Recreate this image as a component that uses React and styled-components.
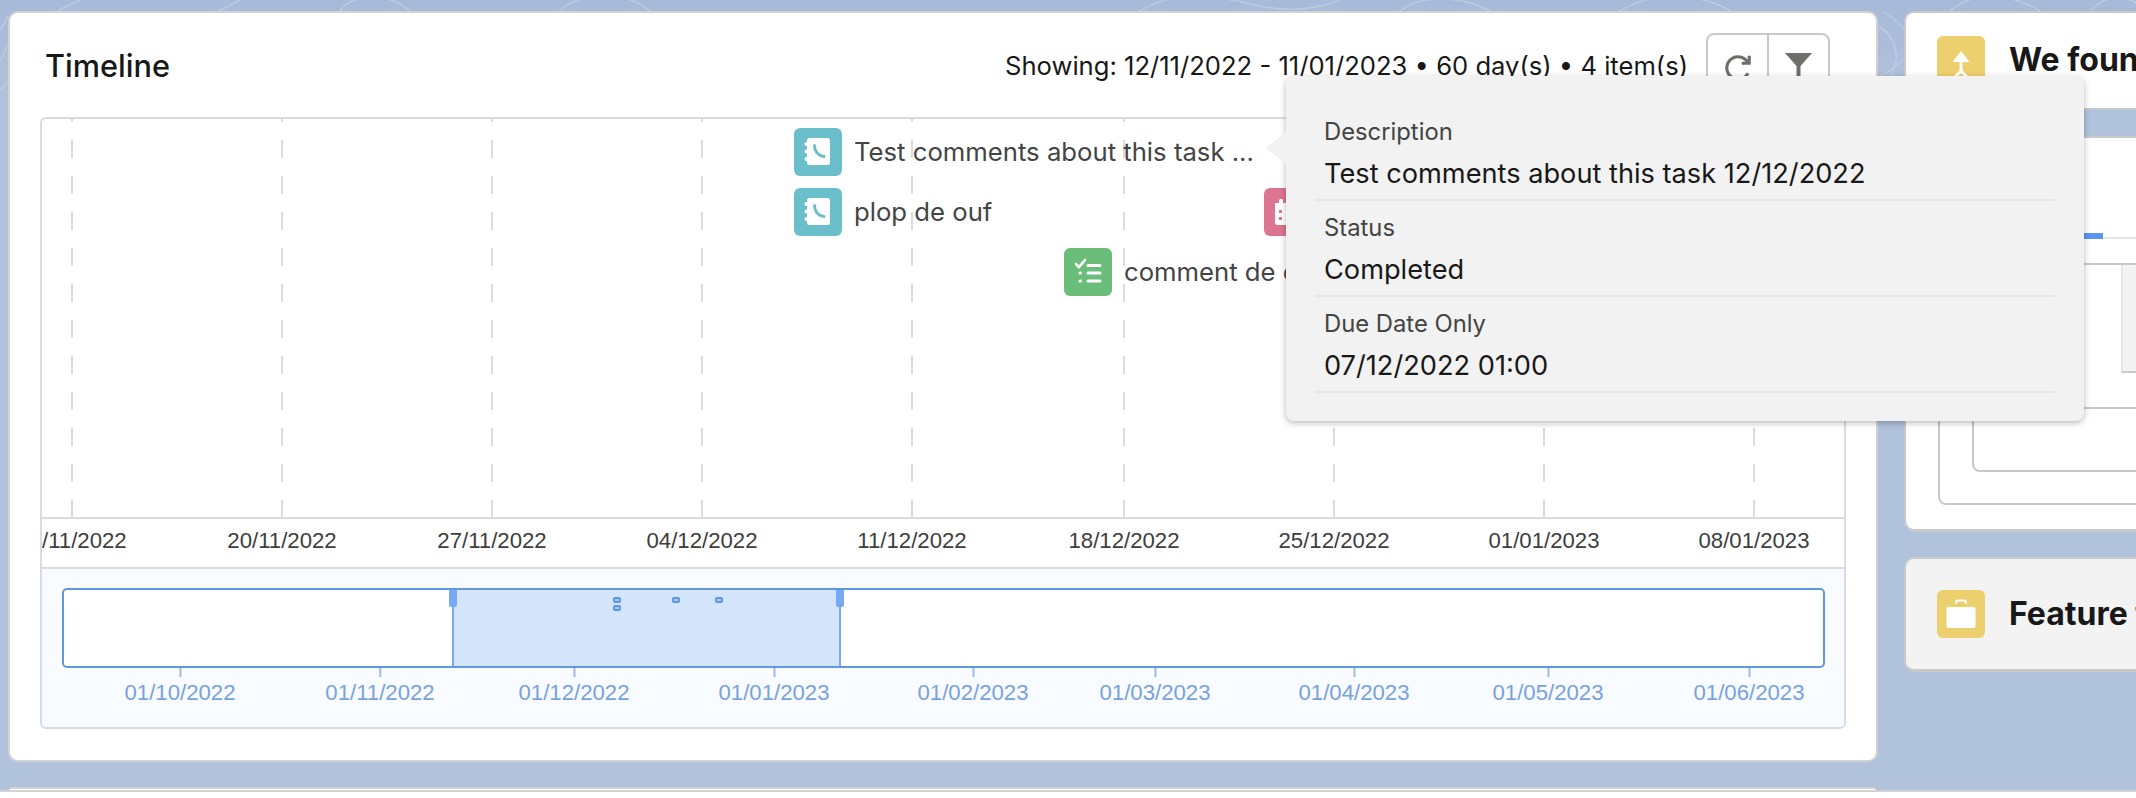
import React from "react";
import styled, { createGlobalStyle } from "styled-components";

const GRID = [72, 282, 492, 702, 912, 1124, 1334, 1544, 1754];
const AXIS = ["13/11/2022", "20/11/2022", "27/11/2022", "04/12/2022", "11/12/2022", "18/12/2022", "25/12/2022", "01/01/2023", "08/01/2023"];
const NAV = [
  [180, "01/10/2022"],
  [380, "01/11/2022"],
  [574, "01/12/2022"],
  [774, "01/01/2023"],
  [973, "01/02/2023"],
  [1155, "01/03/2023"],
  [1354, "01/04/2023"],
  [1548, "01/05/2023"],
  [1749, "01/06/2023"],
];
const MARKS = [
  [613, 597],
  [613, 605],
  [672, 597],
  [715, 597],
];
const FIELDS = [
  ["Description", "Test comments about this task 12/12/2022"],
  ["Status", "Completed"],
  ["Due Date Only", "07/12/2022 01:00"],
];

const PLOT_LEFT = 42;
const PLOT_TOP = 119;
const TRACK_LEFT = 64;
const TRACK_TOP = 590;
const SCALE_LEFT = 62;

export default function App() {
  return (
    <Page>
      <GlobalStyle />
      <Contours viewBox="0 0 2136 120" aria-hidden="true">
        <path d="M340 11C350-6 390-8 410 11M560 11C580-10 630-8 650 11M1140 11C1170-8 1210-6 1250 4S1320 8 1340 0M1400 11C1420-5 1460-5 1490 11M1620 11C1650-8 1700-8 1730 11M1950 11C1970-8 2010-8 2040 11M2090 11C2105-6 2125-4 2136 3M240 0C230 6 220 10 218 11M80 0C70 5 60 9 58 11" />
        <path d="M0 30C4 24 6 20 8 16M0 62C4 54 6 48 8 44M0 90C3 86 6 84 8 82M1878 26C1896 36 1902 58 1890 76C1886 84 1880 86 1878 88M1904 58C1896 66 1886 74 1878 78M1884 12C1892 18 1900 22 1904 30M1878 120C1888 100 1896 96 1904 94" />
      </Contours>
      <Columns>
        <MainCard>
          <Header>
            <Title>Timeline</Title>
            <Summary>Showing: 12/11/2022 - 11/01/2023 • 60 day(s) • 4 item(s)</Summary>
            <ButtonGroup>
              <IconButton aria-label="Refresh">
                <svg width="30" height="30" viewBox="0 0 24 24" fill="none" stroke="#706e6b" strokeWidth="2.500">
                  <path d="M20 17a9 9 0 1 1-1.500-10.500L21 9" />
                  <path d="M21 3v6h-6" />
                </svg>
              </IconButton>
              <IconButton aria-label="Filter">
                <svg width="27" height="28" viewBox="0 0 27 28">
                  <path d="M0 0h27L15.500 13v15h-4V13z" fill="#706e6b" />
                </svg>
              </IconButton>
            </ButtonGroup>
          </Header>
          <Chart>
            <Plot>
              {GRID.map((x) => (
                <GridLine key={x} $x={x - PLOT_LEFT} />
              ))}
              <TimelineEvent $x={794} $y={128}>
                <CallIcon />
                <EventLabel>Test comments about this task ...</EventLabel>
              </TimelineEvent>
              <TimelineEvent $x={794} $y={188}>
                <CallIcon />
                <EventLabel>plop de ouf</EventLabel>
              </TimelineEvent>
              <TimelineEvent $x={1264} $y={188}>
                <CalendarIcon />
              </TimelineEvent>
              <TimelineEvent $x={1064} $y={248}>
                <TaskIcon />
                <EventLabel>comment de ouf</EventLabel>
              </TimelineEvent>
            </Plot>
            <Axis>
              {AXIS.map((label, i) => (
                <AxisLabel key={label} $x={GRID[i] - PLOT_LEFT}>
                  {label}
                </AxisLabel>
              ))}
            </Axis>
            <Navigator>
              <Track>
                <Selection>
                  <Handle $side="left" />
                  <Handle $side="right" />
                </Selection>
                {MARKS.map(([x, y]) => (
                  <Mark key={`${x}-${y}`} $x={x - TRACK_LEFT} $y={y - TRACK_TOP} />
                ))}
              </Track>
              <NavScale>
                {NAV.map(([x, label]) => (
                  <NavTick key={label} $x={x - SCALE_LEFT}>
                    {label}
                  </NavTick>
                ))}
              </NavScale>
            </Navigator>
          </Chart>
        </MainCard>

        <SideColumn>
          <SideCard>
            <SideHeader>
              <MergeIcon />
              <SideTitle>We found</SideTitle>
            </SideHeader>
            <SideBody>
              <Progress>
                <ProgressFill />
              </Progress>
              <OuterBox>
                <ShadedBox />
                <InnerBox />
              </OuterBox>
            </SideBody>
          </SideCard>
          <FeatureCard>
            <BriefcaseIcon />
            <SideTitle>Feature toggles</SideTitle>
          </FeatureCard>
        </SideColumn>
      </Columns>
      <NextCard />
      <PageEdge />

      <Popover>
        <PopoverArrow />
        {FIELDS.map(([label, value]) => (
          <Field key={label}>
            <FieldLabel>{label}</FieldLabel>
            <FieldValue>{value}</FieldValue>
          </Field>
        ))}
      </Popover>
    </Page>
  );
}

function CallIcon() {
  return (
    <IconTile $color="#6bbfcb">
      <svg width="48" height="48" viewBox="0 0 48 48">
        <rect x="13" y="10" width="23" height="27" rx="2.5" fill="#fff" />
        <circle cx="12.5" cy="16" r="2" fill="#fff" />
        <circle cx="12.5" cy="23.5" r="2" fill="#fff" />
        <circle cx="12.5" cy="31" r="2" fill="#fff" />
        <path d="M20.5 17.5C20.5 23 24 27.5 30 28.5" fill="none" stroke="#6bbfcb" strokeWidth="3" strokeLinecap="round" />
      </svg>
    </IconTile>
  );
}

function TaskIcon() {
  return (
    <IconTile $color="#6bbd7a">
      <svg width="48" height="48" viewBox="0 0 48 48" fill="none" stroke="#fff" strokeWidth="3" strokeLinecap="round">
        <path d="M12 16l3 3 6-7" strokeWidth="2.6" />
        <path d="M24 17.5h12M24 25h12M24 33h12" />
        <path d="M16 25h.5M16 33h.5" />
      </svg>
    </IconTile>
  );
}

function CalendarIcon() {
  return (
    <IconTile $color="#dc7590">
      <svg width="48" height="48" viewBox="0 0 48 48">
        <rect x="11" y="17" width="26" height="20" rx="2" fill="#fff" />
        <rect x="15" y="11" width="4" height="8" rx="1.5" fill="#fff" />
        <rect x="29" y="11" width="4" height="8" rx="1.5" fill="#fff" />
        <rect x="11" y="15" width="26" height="4" fill="#fff" />
        <path d="M15 22h3v3h-3zM15 29h3v3h-3zM23 22h3v3h-3zM23 29h3v3h-3zM30 22h3v3h-3zM30 29h3v3h-3z" fill="#dc7590" />
      </svg>
    </IconTile>
  );
}

function MergeIcon() {
  return (
    <IconTile $color="#ecd06e">
      <svg width="48" height="48" viewBox="0 0 48 48" fill="none" stroke="#fff" strokeWidth="3">
        <path d="M15.5 26L24 15l8.500 11z" fill="#fff" stroke="none" />
        <path d="M24 25v10M24 35l-7 7M24 35l7 7" strokeLinecap="round" />
      </svg>
    </IconTile>
  );
}

function BriefcaseIcon() {
  return (
    <IconTile $color="#ecd06e">
      <svg width="48" height="48" viewBox="0 0 48 48">
        <rect x="9.500" y="17" width="29" height="21" rx="2" fill="#fff" />
        <path d="M19 14v-1.500a2 2 0 0 1 2-2h6a2 2 0 0 1 2 2V14" fill="none" stroke="#fff" strokeWidth="2" />
      </svg>
    </IconTile>
  );
}

const GlobalStyle = createGlobalStyle`
  html, body {
    margin: 0;
    overflow: hidden;
  }

  body {
    font-family: Inter, "Noto Sans", sans-serif;
  }

  * {
    box-sizing: border-box;
  }
`;

const Page = styled.div`
  position: relative;
  width: 2136px;
  height: 798px;
  padding-top: 11px;
  overflow: hidden;
  background: linear-gradient(#a8bad9, #b1c2dc 110px);
`;

const Contours = styled.svg`
  position: absolute;
  top: 0;
  left: 0;
  width: 2136px;
  height: 120px;

  path {
    fill: none;
    stroke: #bccae2;
    stroke-width: 1.5;
  }
`;

const Columns = styled.div`
  position: relative;
  display: flex;
  gap: 26px;
  height: 751px;
  padding-left: 8px;
`;

const MainCard = styled.section`
  display: flex;
  flex-direction: column;
  flex: 0 0 1870px;
  padding-bottom: 31px;
  background: #fff;
  border: 2px solid #d2d2d2;
  border-radius: 10px;
`;

const Header = styled.header`
  display: flex;
  align-items: center;
  flex: 0 0 104px;
  padding: 0 46px 0 35px;
`;

const Title = styled.h2`
  flex: 1;
  margin: 0;
  font-size: 30.7px;
  font-weight: 500;
  color: #181818;
`;

const Summary = styled.span`
  margin-right: 18px;
  font-size: 25.6px;
  color: #181818;
`;

const ButtonGroup = styled.div`
  display: flex;
  width: 124px;
  height: 64px;
  border: 2px solid #c9c9c9;
  border-radius: 8px;
`;

const IconButton = styled.button`
  display: flex;
  flex: 1;
  align-items: center;
  justify-content: center;
  padding: 4px 0 0;
  background: none;
  border: none;

  & + & {
    border-left: 2px solid #c9c9c9;
  }
`;

const Chart = styled.div`
  display: flex;
  flex: 1;
  flex-direction: column;
  margin: 0 30px;
  overflow: hidden;
  border: 2px solid #d8dbe5;
  border-radius: 6px;
`;

const Plot = styled.div`
  position: relative;
  flex: 1;
`;

const GridLine = styled.div`
  position: absolute;
  top: 0;
  bottom: 0;
  left: ${(p) => p.$x - 1}px;
  width: 2px;
  background: linear-gradient(#dddbda 50%, transparent 50%) 0 21px / 2px 36px repeat-y;
`;

const TimelineEvent = styled.div`
  position: absolute;
  top: ${(p) => p.$y - PLOT_TOP}px;
  left: ${(p) => p.$x - PLOT_LEFT}px;
  display: flex;
  align-items: center;
  gap: 12px;
  white-space: nowrap;
`;

const IconTile = styled.span`
  display: block;
  flex: 0 0 48px;
  width: 48px;
  height: 48px;
  overflow: hidden;
  background: ${(p) => p.$color};
  border-radius: 6px;
`;

const EventLabel = styled.span`
  margin-top: -2px;
  font-size: 25.7px;
  color: #444;
`;

const Axis = styled.div`
  position: relative;
  flex: 0 0 50px;
  border-top: 2px solid #d8dbe5;
`;

const AxisLabel = styled.span`
  position: absolute;
  top: 9px;
  left: ${(p) => p.$x}px;
  font-family: "Liberation Sans", Arial, sans-serif;
  font-size: 22.2px;
  line-height: 26px;
  color: #3e3e3c;
  white-space: nowrap;
  transform: translateX(-50%);
`;

const Navigator = styled.div`
  flex: 0 0 160px;
  padding: 19px 19px 0 20px;
  background: #f8fbff;
  border-top: 2px solid #d8dbe5;
`;

const Track = styled.div`
  position: relative;
  height: 80px;
  background: #fff;
  border: 2px solid #5f98e2;
  border-radius: 5px;
`;

const Selection = styled.div`
  position: absolute;
  top: 0;
  bottom: 0;
  left: 388px;
  width: 389px;
  background: #d4e4fb;
  border-right: 2px solid #78a9f4;
  border-left: 2px solid #78a9f4;
`;

const Handle = styled.span`
  position: absolute;
  top: 0;
  ${(p) => p.$side}: -5px;
  width: 8px;
  height: 17px;
  background: #78a9f4;
  border-radius: 0 0 2px 2px;
`;

const Mark = styled.span`
  position: absolute;
  top: ${(p) => p.$y}px;
  left: ${(p) => p.$x}px;
  width: 8px;
  height: 6px;
  background: #a9c8f5;
  border: 2px solid #5f98e2;
  border-radius: 2px;
`;

const NavScale = styled.div`
  position: relative;
  height: 40px;
`;

const NavTick = styled.span`
  position: absolute;
  top: 0;
  left: ${(p) => p.$x}px;
  padding-top: 12px;
  font-family: "Liberation Sans", Arial, sans-serif;
  font-size: 22.2px;
  line-height: 26px;
  color: #78a2de;
  white-space: nowrap;
  transform: translateX(-50%);

  &::before {
    content: "";
    position: absolute;
    top: 0;
    left: 50%;
    width: 2px;
    height: 9px;
    margin-left: -1px;
    background: #9dbbe8;
  }
`;

const SideColumn = styled.div`
  display: flex;
  flex: 0 0 600px;
  flex-direction: column;
  gap: 25px;
`;

const SideCard = styled.section`
  display: flex;
  flex-direction: column;
  height: 521px;
  background: #b1c2dc;
  border: 2px solid #c9c9c9;
  border-bottom-width: 3px;
  border-radius: 10px;
`;

const SideHeader = styled.header`
  display: flex;
  flex: 0 0 97px;
  gap: 24px;
  padding: 23px 0 0 31px;
  background: #fff;
  border-bottom: 2px solid #c9c9c9;
  border-radius: 8px 8px 0 0;
`;

const SideTitle = styled.h3`
  margin: 0;
  font-size: 32px;
  font-weight: 700;
  line-height: 48px;
  color: #181818;
  white-space: nowrap;
`;

const SideBody = styled.div`
  flex: 1;
  margin-top: 26px;
  padding: 99px 0 0 32px;
  background: #fff;
  border-top: 2px solid #c9c9c9;
  border-radius: 0 0 8px 8px;
`;

const Progress = styled.div`
  height: 2px;
  margin-bottom: 24px;
  background: #e5e5e5;
`;

const ProgressFill = styled.div`
  width: 165px;
  height: 6px;
  background: #5a95f0;
  transform: translateY(-4px);
`;

const OuterBox = styled.div`
  position: relative;
  height: 242px;
  padding: 142px 0 0 32px;
  border: 2px solid #c9c9c9;
  border-radius: 8px;
`;

const ShadedBox = styled.div`
  position: absolute;
  top: 0;
  left: 181px;
  width: 400px;
  height: 108px;
  background: #f3f3f3;
  border-bottom: 2px solid #c9c9c9;
  border-left: 2px solid #e5e5e5;
`;

const InnerBox = styled.div`
  height: 65px;
  border: 2px solid #c9c9c9;
  border-radius: 8px;
`;

const FeatureCard = styled.section`
  display: flex;
  align-items: center;
  gap: 24px;
  height: 115px;
  padding-left: 31px;
  background: #f3f3f3;
  border: 2px solid #c9c9c9;
  border-bottom-width: 3px;
  border-radius: 10px;
`;

const NextCard = styled.div`
  position: relative;
  width: 1867px;
  height: 3px;
  margin: 25px 0 0 9px;
  background: #fff;
  border-top: 2px solid #d2d2d2;
  border-radius: 8px 8px 0 0;
`;

const PageEdge = styled.div`
  position: relative;
  height: 8px;
  background: #fff;
  border-top: 2px solid #d2d2d2;
`;

const Popover = styled.div`
  position: absolute;
  top: 76px;
  left: 1286px;
  width: 798px;
  height: 345px;
  padding: 29px 29px;
  background: #f2f2f2;
  border-radius: 8px;
  box-shadow: 0 2px 6px rgba(0, 0, 0, 0.28);
`;

const PopoverArrow = styled.span`
  position: absolute;
  top: 56px;
  left: -21px;
  width: 32px;
  height: 32px;
  background: #f2f2f2;
  clip-path: polygon(0 50%, 66% 0, 100% 0, 100% 100%, 66% 100%);
`;

const Field = styled.div`
  height: 96px;
  padding: 12px 0 0 9px;
  border-bottom: 2px solid #e5e5e5;
`;

const FieldLabel = styled.div`
  font-size: 23.8px;
  line-height: 30px;
  color: #444;
`;

const FieldValue = styled.div`
  margin-top: 12px;
  font-size: 27.2px;
  line-height: 30px;
  color: #181818;
`;
